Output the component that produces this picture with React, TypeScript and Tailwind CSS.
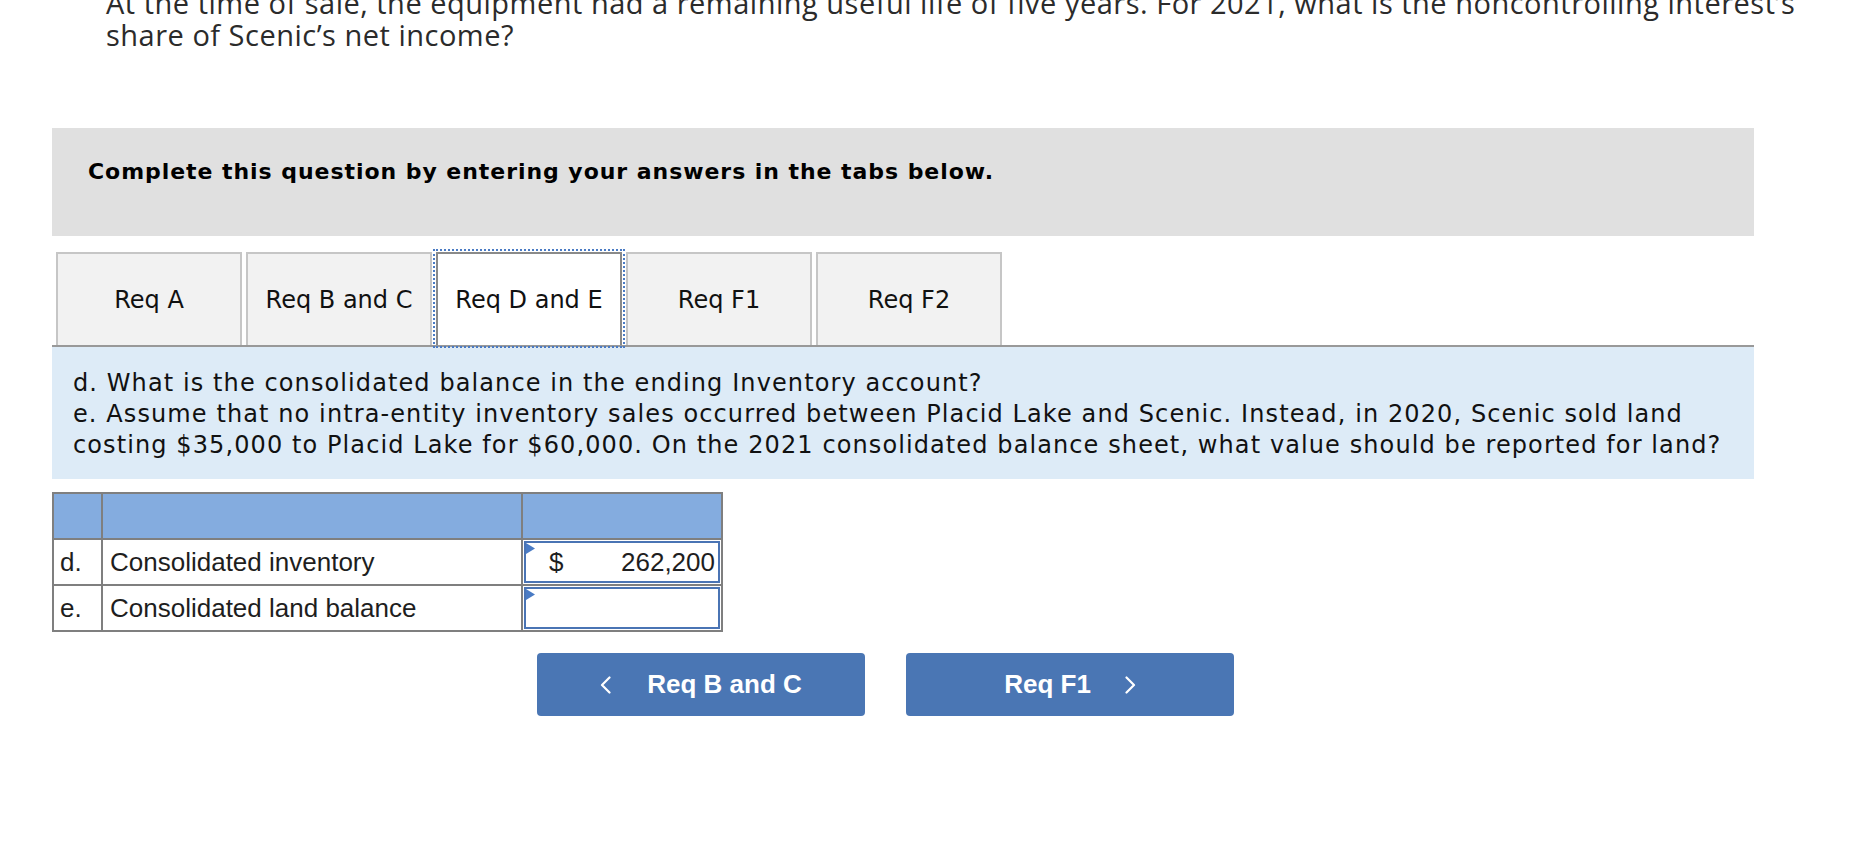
import React from 'react'

const tabs = ['Req A', 'Req B and C', 'Req D and E', 'Req F1', 'Req F2']
const activeTab = 2

const rows = [
  { key: 'd.', label: 'Consolidated inventory', value: '262,200', dollar: true },
  { key: 'e.', label: 'Consolidated land balance', value: '', dollar: false },
]

function Chevron({ dir }: { dir: 'left' | 'right' }) {
  return (
    <svg width="11" height="18" viewBox="0 0 11 18" fill="none" className="shrink-0">
      <polyline
        points={dir === 'left' ? '9.5,1.5 2,9 9.5,16.5' : '1.5,1.5 9,9 1.5,16.5'}
        stroke="white"
        strokeWidth="2.2"
        strokeLinecap="round"
        strokeLinejoin="round"
      />
    </svg>
  )
}

function Flag() {
  return (
    <svg width="9" height="11" viewBox="0 0 9 11" className="absolute left-0 top-0">
      <polygon points="0,0 9,5.5 0,11" fill="#4a7bc4" />
    </svg>
  )
}

export default function App() {
  return (
    <div className="min-h-screen bg-white overflow-hidden">
      <p className="-mt-[13px] pl-[106px] font-['Open_Sans',sans-serif] text-[29px] leading-[32px] tracking-[0.5px] text-[#2b2b2b] whitespace-nowrap">
        At the time of sale, the equipment had a remaining useful life of five years. For 2021, what is the noncontrolling interest’s
        <br />
        share of Scenic’s net income?
      </p>

      <div className="ml-[52px] mt-[77px] w-[1702px] font-['DejaVu_Sans',Verdana,sans-serif]">
        <div className="h-[108px] bg-[#e0e0e0] pl-[36px] pt-[29px] text-[22px] leading-[30px] tracking-[0.95px] font-bold text-black">
          Complete this question by entering your answers in the tabs below.
        </div>

        <div className="mt-[16px] flex gap-[4px] pl-[4px] border-b-2 border-[#999999]">
          {tabs.map((t, i) =>
            i === activeTab ? (
              <div
                key={t}
                className="relative z-10 flex h-[93px] w-[186px] items-center justify-center border-2 border-b-0 border-[#8a8a8a] bg-white text-[24px] text-[#111] outline-2 outline-dotted outline-[#4a7bc4] outline-offset-[1px]"
              >
                {t}
              </div>
            ) : (
              <div
                key={t}
                className="flex h-[93px] w-[186px] items-center justify-center border-2 border-b-0 border-[#c6c6c6] bg-[#f2f2f2] text-[24px] text-[#111]"
              >
                {t}
              </div>
            )
          )}
        </div>

        <div className="bg-[#ddebf7] px-[21px] pt-[21px] pb-[18px] text-[24px] leading-[31px] tracking-[1.1px] text-[#111]">
          <p>d. What is the consolidated balance in the ending Inventory account?</p>
          <p>
            e. Assume that no intra-entity inventory sales occurred between Placid Lake and Scenic. Instead, in 2020, Scenic sold land
            <br />
            costing $35,000 to Placid Lake for $60,000. On the 2021 consolidated balance sheet, what value should be reported for land?
          </p>
        </div>

        <table className="mt-[13px] border-collapse font-['Liberation_Sans',Arial,sans-serif] text-[26px] text-[#1e1e1e]">
          <tbody>
            <tr className="bg-[#84acdf]">
              <td className="h-[46px] w-[49px] border-2 border-[#7f7f7f]" />
              <td className="h-[46px] w-[420px] border-2 border-[#7f7f7f]" />
              <td className="h-[46px] w-[200px] border-2 border-[#7f7f7f]" />
            </tr>
            {rows.map((r) => (
              <tr key={r.key}>
                <td className="h-[46px] border-2 border-[#7f7f7f] pl-[6px]">{r.key}</td>
                <td className="h-[46px] border-2 border-[#7f7f7f] pl-[7px]">{r.label}</td>
                <td className="h-[46px] border-2 border-[#7f7f7f] p-0">
                  <div className="relative m-px flex h-[42px] items-center border-2 border-[#4a74b4] bg-white pl-[23px] pr-[3px]">
                    <Flag />
                    {r.dollar && <span>$</span>}
                    <span className="ml-auto">{r.value}</span>
                  </div>
                </td>
              </tr>
            ))}
          </tbody>
        </table>

        <div className="mt-[21px] ml-[485px] flex gap-[41px] font-['Liberation_Sans',Arial,sans-serif] text-[26px] font-bold text-white">
          <button className="flex h-[63px] w-[328px] items-center justify-center gap-[36px] rounded-[4px] bg-[#4a76b4]">
            <Chevron dir="left" />
            <span>Req B and C</span>
          </button>
          <button className="flex h-[63px] w-[328px] items-center justify-center gap-[34px] rounded-[4px] bg-[#4a76b4]">
            <span>Req F1</span>
            <Chevron dir="right" />
          </button>
        </div>
      </div>
    </div>
  )
}
